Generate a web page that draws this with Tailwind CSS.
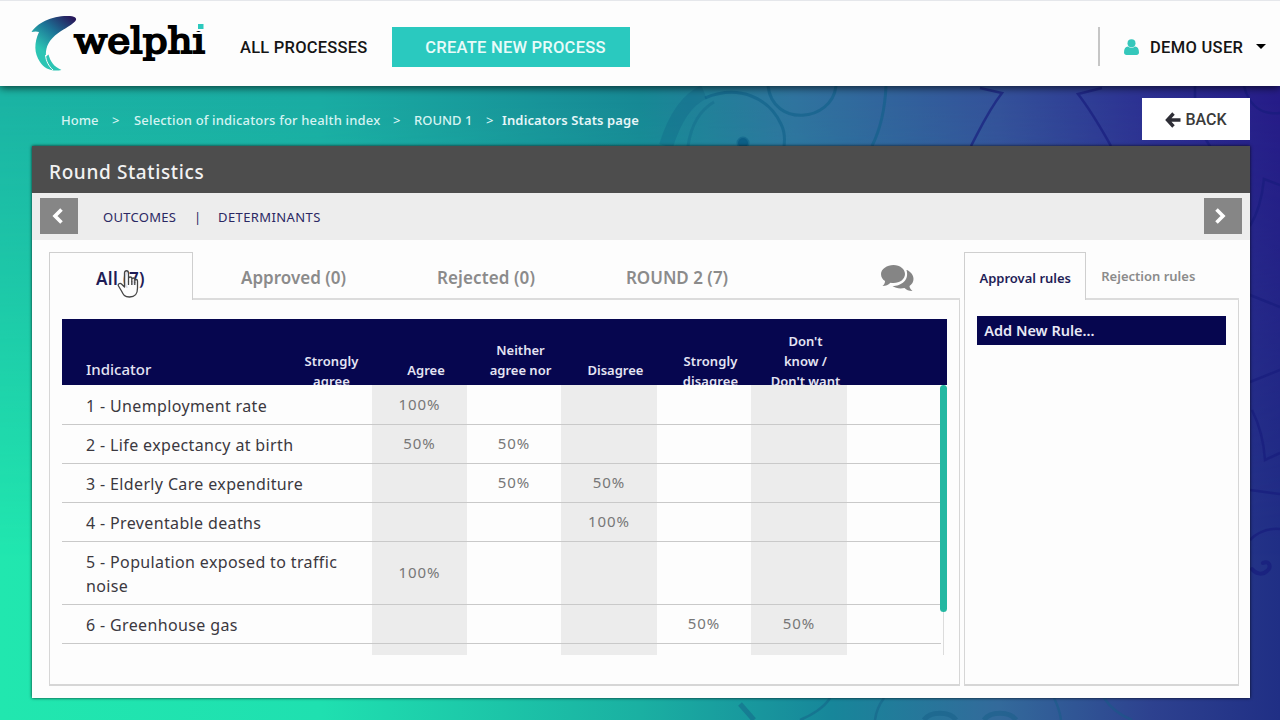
<!DOCTYPE html>
<html lang="en">
<head>
    <meta charset="UTF-8">
    <meta name="viewport" content="width=device-width, initial-scale=1.0">
    <title>Welphi - Round Statistics</title>
    <script src="https://cdn.jsdelivr.net/npm/@tailwindcss/browser@4"></script>
</head>
<body class="relative w-[1280px] h-[720px] overflow-hidden font-['Noto_Sans',sans-serif] bg-[#1fb5a5]">

    <!-- Background -->
    <svg class="absolute inset-0 -z-10" width="1280" height="720" viewBox="0 0 1280 720" fill="none">
        <defs>
            <linearGradient id="top" x1="0" y1="0" x2="1280" y2="0" gradientUnits="userSpaceOnUse">
                <stop offset="0" stop-color="#1bb4a4"/>
                <stop offset=".25" stop-color="#1aaca3"/>
                <stop offset=".5" stop-color="#178995"/>
                <stop offset=".62" stop-color="#30749f"/>
                <stop offset=".78" stop-color="#34529a"/>
                <stop offset=".9" stop-color="#2c2f92"/>
                <stop offset="1" stop-color="#261c88"/>
            </linearGradient>
            <linearGradient id="bottom" x1="0" y1="0" x2="1280" y2="0" gradientUnits="userSpaceOnUse">
                <stop offset="0" stop-color="#21e7af"/>
                <stop offset=".25" stop-color="#1fe0b0"/>
                <stop offset=".5" stop-color="#1ab0a2"/>
                <stop offset=".65" stop-color="#17869a"/>
                <stop offset=".78" stop-color="#336a9b"/>
                <stop offset=".9" stop-color="#2d418f"/>
                <stop offset="1" stop-color="#202f85"/>
            </linearGradient>
            <linearGradient id="fade" x1="0" y1="100" x2="0" y2="560" gradientUnits="userSpaceOnUse">
                <stop offset="0" stop-color="#000"/>
                <stop offset="1" stop-color="#fff"/>
            </linearGradient>
            <mask id="down"><rect width="1280" height="720" fill="url(#fade)"/></mask>
        </defs>
        <rect width="1280" height="720" fill="url(#top)"/>
        <rect width="1280" height="720" fill="url(#bottom)" mask="url(#down)"/>
        <g stroke="#0c5f86" stroke-opacity=".55" stroke-width="3">
            <path d="M705 98c34-14 64 0 76 26 4 8 4 15 3 22"/>
            <path d="M768 86c5 42 64 36 68 0"/>
            <path d="M666 146c8-26 20-46 38-54" stroke-width="14" stroke-opacity=".3"/>
            <path d="M688 146c3-20 12-36 26-44" stroke-opacity=".3"/>
            <path d="M886 86c-1 22-5 42-14 60"/>
            <circle cx="743" cy="143" r="5" fill="#0c5f86"/>
        </g>
        <g stroke="#171c7c" stroke-opacity=".65" stroke-width="2.500">
            <path d="M980 88l22 5c-14 18-22 36-31 53"/>
            <path d="M1102 88l-24 6c14 18 24 36 33 52M1195 86v12M1205 138l6 10"/>
            <path d="M1244 86c5 20 18 29 36 27"/>
            <path d="M1280 185l-16-6c-2 20-6 34-14 47M1250 295l30 12M1250 382l30-12M1252 410c8 16 12 34 13 50l15-7M1250 490l30 4"/>
            <path d="M1250 540c8-8 18-12 30-11"/>
            <path d="M1263 563c6-3 9 4 4 8-5 5-12 2-15-2" stroke-width="4" stroke-linecap="round"/>
        </g>
        <g stroke="#135d86" stroke-opacity=".45" stroke-width="2.500">
            <path d="M830 698c-6 10-20 18-30 22M884 698c-6 8-8 14-9 22M1054 698c4 8 6 14 7 22M1104 698c8 12 18 18 28 22"/>
            <path d="M924 720c6-9 26-9 32 0M984 720c6-9 26-9 32 0M740 704l14 16" stroke-width="5"/>
        </g>
    </svg>

    <!-- Header -->
    <header class="flex items-start h-[86px] bg-[#fdfdfd] border-t border-gray-200 shadow-[0_2px_8px_rgba(0,0,0,0.65)]">
        <svg class="ml-[30px] mt-[10px]" width="180" height="64" viewBox="30 11 180 64">
            <defs>
                <linearGradient id="fish" x1="72" y1="18" x2="44" y2="52" gradientUnits="userSpaceOnUse">
                    <stop offset="0" stop-color="#281a5c"/>
                    <stop offset=".5" stop-color="#1c7396"/>
                    <stop offset="1" stop-color="#2cc5b4"/>
                </linearGradient>
            </defs>
            <path d="M31.500 32C37 23 53 15 70 16c6 .5 7.500 3 5 5.500-5 5-13 8-20 14-8 7-9.500 14-9 21l2.500-2c2 7 5 12 13 15.500-9 2-17-1-21.500-8-6-9-6-19-1-30-2.500-1-5-.5-7.500 0z" fill="url(#fish)"/>
            <path d="M45.500 55c.5 6 3 11 7.500 15" stroke="#fdfdfd" stroke-width="1" fill="none"/>
            <text x="74" y="53" font-family="DejaVu Serif" font-size="36" stroke="#000" stroke-width="2" textLength="131" lengthAdjust="spacingAndGlyphs">welphi</text>
            <rect x="192" y="20" width="14" height="11" fill="#fdfdfd"/>
            <rect x="198" y="24" width="5.500" height="5" fill="#2cc9bd"/>
        </svg>
        <nav class="flex items-start">
            <a class="ml-[30px] mt-[35px] w-[127px] text-[16.5px] leading-6 tracking-[0.23px] font-medium font-[Roboto] text-[#151515] whitespace-nowrap">ALL PROCESSES</a>
            <a class="ml-[25px] mt-[26px] w-[238px] h-10 pl-[9px] pt-[3px] flex items-center justify-center bg-[#2ac9bf] text-[16.5px] tracking-[0.25px] font-medium font-[Roboto] text-[#e8fbf9] whitespace-nowrap">CREATE NEW PROCESS</a>
        </nav>
        <div class="flex items-center ml-auto mr-[14px] mt-[26px] h-[39px] border-l-2 border-[#c6c6c6] pl-6">
            <svg width="15" height="16" viewBox="0 0 15 16" fill="#35c7bb"><circle cx="7.500" cy="4.200" r="4"/><path d="M0 13.500C0 9.500 1.500 7.500 4 7.500c2 1.600 5 1.600 7 0 2.500 0 4 2 4 6 0 1.500-1 2.500-2.500 2.500h-10C1 16 0 15 0 13.500z"/></svg>
            <span class="ml-[11px] mt-[3px] w-[94px] text-[16.5px] tracking-[0.3px] font-medium font-[Roboto] text-[#151515] whitespace-nowrap">DEMO USER</span>
            <svg class="ml-3" width="10" height="5" viewBox="0 0 10 5"><path d="M0 0h10L5 5z"/></svg>
        </div>
    </header>

    <!-- Breadcrumb -->
    <div class="flex items-start justify-between h-[60px] pl-[61px] pr-[30px] pt-3">
        <div class="flex mt-3 text-[13px] leading-5 font-medium text-[#d5f3f2] whitespace-nowrap">
            <a class="w-[51px]">Home</a><span class="w-[22px]">&gt;</span>
            <a class="w-[259px] tracking-[0.17px]">Selection of indicators for health index</a><span class="w-[21px]">&gt;</span>
            <a class="w-[72px]">ROUND 1</a><span class="w-4">&gt;</span>
            <span class="font-semibold tracking-[0.13px] text-[#e6f6f8]">Indicators Stats page</span>
        </div>
        <a class="flex items-center justify-center w-[108px] h-[42px] pt-0.5 bg-white text-[16px] font-medium font-[Roboto] text-[#3a3a3a]">
            <svg class="mr-1" width="16" height="16" viewBox="0 0 16 16" fill="none" stroke="#2e2e36" stroke-width="3.400"><path d="M8.500 1.500L2.500 8l6 6.500M3 8h12.500"/></svg>
            BACK
        </a>
    </div>

    <!-- Card -->
    <main class="ml-8 w-[1218px] h-[552px] bg-[#fdfdfd] shadow-[0_0_3px_rgba(0,0,0,0.8)]">
        <h1 class="flex items-center h-[47px] pl-[17px] pt-[6px] bg-[#4d4d4d] text-[19px] tracking-[0.62px] font-medium text-[#f2f2f2]">Round Statistics</h1>
        <div class="flex items-start h-[47px] px-2 pt-[5px] bg-[#ededed] text-[13px] text-[#2b2863]">
            <a class="flex items-center justify-center w-[38px] h-9 pr-[3px] bg-[#868686]">
                <svg width="11" height="16" viewBox="0 0 11 16" fill="none" stroke="#fff" stroke-width="3.600"><path d="M9.500 1.500L3 8l6.500 6.500"/></svg>
            </a>
            <a class="ml-[25px] mt-[9px] w-[91px] leading-5 tracking-[0.3px]">OUTCOMES</a>
            <span class="mt-[9px] w-6 leading-5">|</span>
            <a class="mt-[9px] leading-5 tracking-[0.4px]">DETERMINANTS</a>
            <a class="flex items-center justify-center w-[38px] h-9 pr-[6px] ml-auto bg-[#868686]">
                <svg width="11" height="16" viewBox="0 0 11 16" fill="none" stroke="#fff" stroke-width="3.600"><path d="M1.500 1.500L8 8l-6.500 6.500"/></svg>
            </a>
        </div>

        <div class="flex pl-[17px] pr-[11px] pt-3 gap-1">
            <!-- Indicators -->
            <section class="w-[912px]">
                <div class="flex h-12 text-[17px] font-semibold text-[#8b8b8b]">
                    <a class="relative flex items-center justify-center w-[144px] pt-[5px] pr-px border border-b-0 border-[#cfcfcf] text-[#1f1d57] tracking-[0.4px]">
                        All (7)
                        <svg class="absolute left-[67px] top-[16px]" width="24" height="30" viewBox="0 0 24 30" fill="#fdfdfd" fill-opacity=".85" stroke="#444" stroke-width="1.300" stroke-linejoin="round"><path d="M7.500 18V4c0-3 4-3 4 0v8V9.500c0-2 3.300-2 3.300 0V12v-1.500c0-2 3-2 3 0V13v-1c0-2 2.700-2 2.700 0v7c0 6-2 9-8 9-5 0-6-2-8-6l-3-5c-1-2 1.500-3.500 3-2z"/><path d="M11.500 12v4M14.800 12v4M17.800 13v3"/></svg>
                    </a>
                    <div class="flex flex-1 items-center pt-[5px] border-b-2 border-[#dcdcdc]">
                        <a class="w-[201px] text-center">Approved (0)</a>
                        <a class="w-[184px] text-center tracking-[0.1px]">Rejected (0)</a>
                        <a class="w-[198px] text-center">ROUND 2 (7)</a>
                        <svg class="ml-[105px]" width="34" height="28" viewBox="0 0 34 28" fill="#858585">
                            <path d="M26 6c4 2 6.500 5 6.500 9 0 3-1.500 5-4 7 0 2 1 3 3 5-4 0-6-1-8-3-5 1-9 0-12-2 9 0 17-6 14-16z"/>
                            <path d="M12.500 1C19 1 24 5 24 10s-5 9-11.500 9c-1 0-2 0-3-.3C7 21 5 22 1.500 22c2-2 2.500-3 2.500-5-2.500-1.500-4-4-4-7 0-5 6-9 12.500-9z"/>
                        </svg>
                    </div>
                </div>
                <div class="h-[386px] pl-3 pt-[19px] border border-t-0 border-[#d6d6d6] border-b-2">
                    <!-- Table head -->
                    <div class="grid grid-cols-[222px_95px_94px_95px_95px_95px_95px] w-[885px] h-[66px] overflow-hidden bg-[#06064f] text-[13px] leading-5 font-semibold text-[#e4e4f3] text-center">
                        <div class="pl-6 pt-10 text-left text-[15px] font-medium">Indicator</div>
                        <div class="pt-8 tracking-[0.1px]">Strongly<br>agree</div>
                        <div class="pt-[41px]">Agree</div>
                        <div class="pt-[21px]">Neither<br>agree nor</div>
                        <div class="pt-[41px]">Disagree</div>
                        <div class="pt-8 tracking-[0.1px]">Strongly<br>disagree</div>
                        <div class="pt-3">Don't<br>know /<br>Don't want</div>
                    </div>
                    <!-- Table rows -->
                    <div class="relative w-[885px] h-[270px]">
                        <div id="rows" class="w-[879px] h-[270px] overflow-hidden text-[16px] text-[#3b3840]"></div>
                        <div class="absolute right-[3px] top-0 w-px h-[270px] bg-[#dcdcdc]"></div>
                        <div class="absolute right-0 top-0 w-[7px] h-[227px] rounded-full bg-[#24b8a2]"></div>
                    </div>
                </div>
            </section>

            <!-- Rules -->
            <section class="w-[275px]">
                <div class="flex h-12 text-[13px] font-semibold text-[#8b8b8b]">
                    <a class="flex items-center justify-center w-[122px] pt-1 border border-b-0 border-[#cfcfcf] text-[#1f1d57]">Approval rules</a>
                    <a class="flex flex-1 items-center pl-[15px] pt-1 border-b-2 border-[#dcdcdc]">Rejection rules</a>
                </div>
                <div class="h-[386px] px-3 pt-4 border border-t-0 border-[#d6d6d6] border-b-2">
                    <a class="flex items-center h-[29px] pl-[7px] bg-[#06064f] text-[14.500px] font-semibold text-[#e8e8f5]">Add New Rule...</a>
                </div>
            </section>
        </div>
    </main>

    <script>
        // [label, agree, neither, disagree, strongly disagree, don't know]
        const data = [
            ['1 - Unemployment rate', '100%', '', '', '', ''],
            ['2 - Life expectancy at birth', '50%', '50%', '', '', ''],
            ['3 - Elderly Care expenditure', '', '50%', '50%', '', ''],
            ['4 - Preventable deaths', '', '', '100%', '', ''],
            ['5 - Population exposed to traffic noise', '100%', '', '', '', ''],
            ['6 - Greenhouse gas', '', '', '', '50%', '50%'],
            ['', '', '', '', '', '']
        ];
        document.getElementById('rows').innerHTML = data.map(([label, ...values], row) => `
            <div class="grid grid-cols-[310px_95px_94px_96px_94px_96px_94px] border-b border-[#c9c9c9]">
                <div class="pl-6 pr-4 ${row ? 'pt-2' : 'pt-[9px]'} pb-[6px] min-h-[38px] leading-6 tracking-[0.36px]">${label}</div>
                ${values.map((v, i) => `<div class="flex items-center justify-center pb-px text-[15px] tracking-[0.9px] text-[#777] ${i % 2 ? '' : 'bg-[#ececec]'}">${v}</div>`).join('')}
            </div>`).join('');
    </script>
</body>
</html>
